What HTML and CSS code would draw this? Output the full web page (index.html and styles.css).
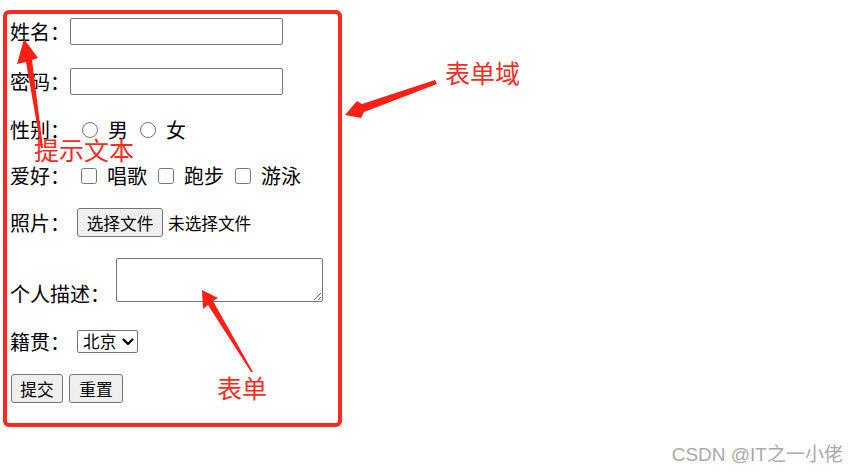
FILE: index.html
```html
<!DOCTYPE html>
<html lang="zh-CN">
<head>
<meta charset="utf-8">
<title>表单</title>
<link rel="stylesheet" href="styles.css">
</head>
<body>
<div class="page">
  <form class="form">
    <div class="row r1"><span class="lbl">姓名：</span><input class="text" type="text"></div>
    <div class="row r2"><span class="lbl">密码：</span><input class="text" type="password"></div>
    <div class="row r3"><span class="lbl">性别：</span>
      <input class="opt" type="radio" name="sex"><span class="opt-txt">男</span>
      <input class="opt" type="radio" name="sex"><span class="opt-txt">女</span>
    </div>
    <div class="row r4"><span class="lbl">爱好：</span>
      <input class="opt" type="checkbox"><span class="opt-txt">唱歌</span>
      <input class="opt" type="checkbox"><span class="opt-txt">跑步</span>
      <input class="opt" type="checkbox"><span class="opt-txt">游泳</span>
    </div>
    <div class="row r5"><span class="lbl">照片：</span><button type="button" class="btn file-btn">选择文件</button><span class="file-txt">未选择文件</span></div>
    <div class="row r6"><span class="lbl lbl-bottom">个人描述：</span><textarea class="area"></textarea></div>
    <div class="row r7"><span class="lbl">籍贯：</span>
      <span class="sel-wrap">
        <select class="sel"><option>北京</option><option>上海</option><option>广州</option></select>
        <svg class="chev" width="12" height="8" viewBox="0 0 12 8"><path d="M1.5 1.5 L6 6 L10.5 1.5" fill="none" stroke="#000" stroke-width="2.2" stroke-linecap="round" stroke-linejoin="round"/></svg>
      </span>
    </div>
    <div class="row r8"><button type="submit" class="btn submit">提交</button><button type="reset" class="btn reset">重置</button></div>
  </form>

  <div class="frame"></div>

  <svg class="arrows" width="857" height="474" viewBox="0 0 857 474">
    <polygon points="24,39 38,58 32,60 43,148 41,148 26,62 17,64" />
    <polygon points="345,115 357,101 362,104 435,80 437,84 364,112 361,118" />
    <polygon points="202,290 218,298 213,301 253,372 251,372 208,305 203,309" />
  </svg>

  <span class="note note-hint">提示文本</span>
  <span class="note note-domain">表单域</span>
  <span class="note note-form">表单</span>

  <div class="watermark">CSDN @IT<span class="wm-cjk">之一小佬</span></div>
</div>
</body>
</html>
```

FILE: styles.css
```css
html, body {
  margin: 0;
  padding: 0;
  background: #ffffff;
}

.page {
  position: relative;
  width: 857px;
  height: 474px;
  overflow: hidden;
  font-family: "Noto Sans CJK SC", "Noto Sans", sans-serif;
  color: #000;
}

.form {
  display: flex;
  flex-direction: column;
  padding: 18px 0 0 10px;
  margin: 0;
}

.row {
  display: flex;
  align-items: center;
}

.r1 { height: 27px; }
.r2 { height: 27px; margin-top: 23px; }
.r3 { height: 25px; margin-top: 22px; }
.r4 { height: 25px; margin-top: 21px; }
.r5 { height: 29px; margin-top: 20px; }
.r6 { height: 44px; margin-top: 21px; align-items: flex-end; }
.r7 { height: 23px; margin-top: 28px; }
.r8 { height: 29px; margin-top: 21px; }

.lbl {
  font-size: 20px;
  line-height: 24px;
  white-space: nowrap;
}

.lbl-bottom {
  margin-bottom: -4px;
}

.text {
  box-sizing: border-box;
  width: 213px;
  height: 27px;
  margin: 0;
  border: 1px solid #767676;
  border-radius: 2px;
  background: #fff;
  font-size: 16px;
}

.opt {
  width: 16px;
  height: 16px;
  margin: 0 10px 0 11px;
}

.r3 .opt { margin-left: 12px; }

.opt-txt {
  font-size: 20px;
  line-height: 24px;
}

.btn {
  box-sizing: border-box;
  height: 29px;
  margin: 0;
  padding: 0 8px;
  font-family: "Noto Sans CJK SC", sans-serif;
  font-size: 16.67px;
  line-height: 20px;
  color: #000;
  background: #efefef;
  border: 1px solid #767676;
  border-radius: 3px;
}

.file-btn {
  width: 86px;
  margin-left: 7px;
}

.file-txt {
  margin-left: 5px;
  font-size: 16.67px;
  line-height: 20px;
}

.area {
  box-sizing: border-box;
  width: 207px;
  height: 44px;
  margin: 0 0 0 6px;
  border: 1px solid #767676;
  border-radius: 2px;
  background: #fff;
}

.sel-wrap {
  position: relative;
  display: flex;
  margin-left: 7px;
}

.sel {
  box-sizing: border-box;
  width: 61px;
  height: 23px;
  margin: 0;
  padding: 0 0 0 5px;
  appearance: none;
  -webkit-appearance: none;
  background: #fff;
  border: 1px solid #767676;
  border-radius: 2px;
  font-family: "Noto Sans CJK SC", sans-serif;
  font-size: 16.67px;
  line-height: 21px;
  color: #000;
}

.chev {
  position: absolute;
  left: 45px;
  top: 8px;
  pointer-events: none;
}

.submit {
  width: 52px;
  margin-left: 1px;
}

.reset {
  width: 54px;
  margin-left: 6px;
}

.frame {
  position: absolute;
  left: 3px;
  top: 10px;
  width: 331px;
  height: 409px;
  border: 4px solid #fe2a22;
  border-radius: 6px;
}

.arrows {
  position: absolute;
  left: 0;
  top: 0;
  fill: #fe1f17;
}

.note {
  position: absolute;
  font-size: 25px;
  line-height: 25px;
  color: #ff2a20;
  white-space: nowrap;
}

.note-hint { left: 34px; top: 137px; }
.note-domain { left: 445px; top: 60px; }
.note-form { left: 217px; top: 375px; }

.watermark {
  position: absolute;
  right: 14px;
  top: 442px;
  font-family: "Liberation Sans", "Noto Sans CJK SC", sans-serif;
  font-size: 19px;
  line-height: 22px;
  color: #a9a9a9;
  white-space: nowrap;
}

.wm-cjk {
  font-family: "Noto Sans CJK SC", sans-serif;
}
```
